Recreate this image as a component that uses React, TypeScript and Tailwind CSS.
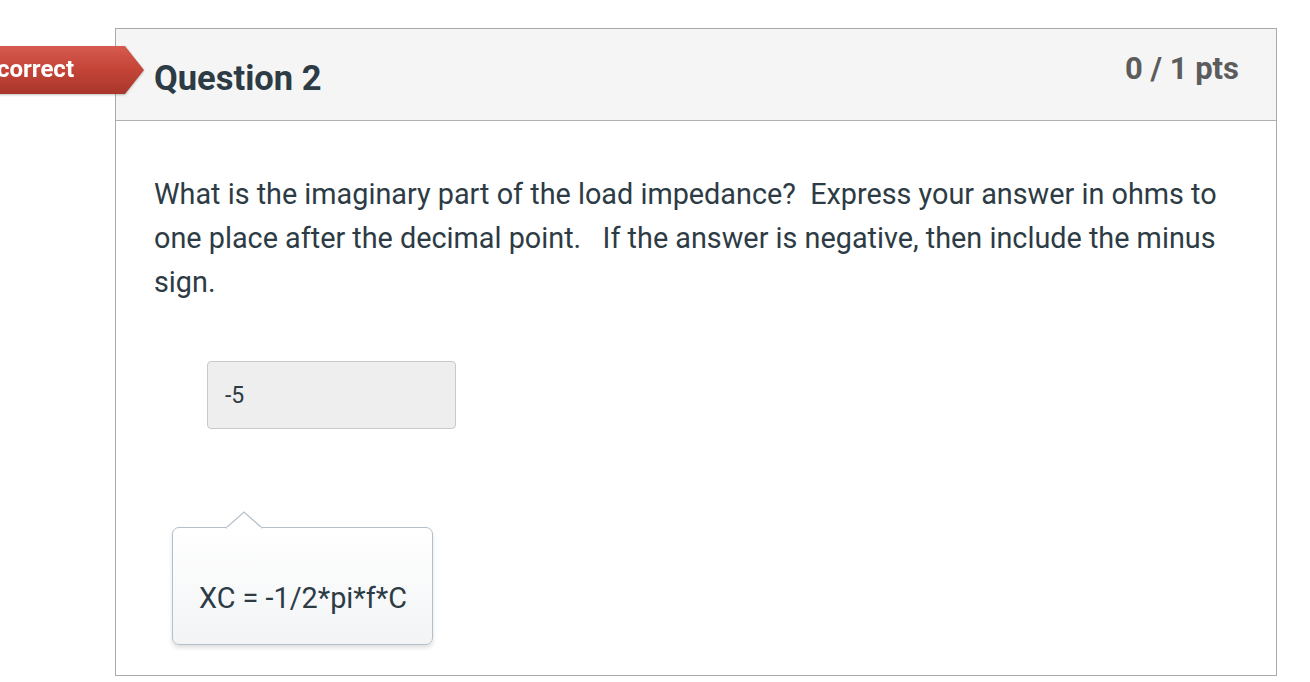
import React from 'react';

const Badge: React.FC = () => (
  <div className="absolute left-[-75px] top-[46px] flex h-[48px] items-stretch drop-shadow-[0_1px_1px_rgba(0,0,0,0.25)]">
    <div className="flex w-[200px] items-center justify-end bg-gradient-to-b from-[#d65a4f] via-[#c44437] to-[#a8362b] pb-[3px] pr-[51px] text-[24px] font-bold text-white">
      Incorrect
    </div>
    <svg width="19" height="48" viewBox="0 0 19 48" className="block">
      <defs>
        <linearGradient id="tip" x1="0" y1="0" x2="0" y2="1">
          <stop offset="0" stopColor="#d65a4f" />
          <stop offset="0.5" stopColor="#c44437" />
          <stop offset="1" stopColor="#a8362b" />
        </linearGradient>
      </defs>
      <polygon points="0,0 19,24 0,48" fill="url(#tip)" />
    </svg>
  </div>
);

const Hint: React.FC = () => (
  <div className="relative ml-[18px] mt-[98px] w-[261px]">
    <svg width="36" height="18" viewBox="0 0 36 18" className="absolute left-[54px] top-[-16px]">
      <polygon points="0,17 18,1 36,17" fill="#ffffff" stroke="#b3bfca" strokeWidth="1.2" />
      <rect x="1" y="16" width="34" height="3" fill="#ffffff" />
    </svg>
    <div className="flex h-[118px] items-center rounded-[7px] border border-[#b3bfca] bg-gradient-to-b from-white to-[#f2f4f5] pl-[26px] pt-[25px] text-[28.8px] text-[#2d3b45] shadow-[0_3px_4px_rgba(0,0,0,0.12)]">
      XC = -1/2*pi*f*C
    </div>
  </div>
);

export default function App() {
  return (
    <div className="relative h-[682px] w-[1310px] overflow-hidden bg-white pl-[115px] pt-[28px] font-['Roboto',sans-serif]">
      <div className="h-[648px] w-[1162px] border border-[#a9a9a9]">
        <div className="flex h-[92px] justify-between border-b border-[#b1b1b1] bg-[#f5f5f5] pl-[38px] pr-[37px]">
          <h2 className="pt-[29px] text-[34.5px] font-bold leading-[40px] text-[#2d3b45]">Question 2</h2>
          <div className="pt-[22px] text-[31px] font-bold leading-[36px] text-[#5c5c5c]">0 / 1 pts</div>
        </div>
        <div className="pl-[38px] pr-[50px] pt-[51px]">
          <p className="text-[28.8px] leading-[44px] text-[#2d3b45]">
            What is the imaginary part of the load impedance?&nbsp; Express your answer in ohms to one place after the decimal point.&nbsp;&nbsp; If the answer is negative, then include the minus sign.
          </p>
          <div className="ml-[53px] mt-[57px] flex h-[68px] w-[249px] items-center rounded-[4px] border border-[#c9c9c9] bg-[#eeeeee] pl-[17px] pt-[3px] text-[23px] text-[#2d3b45]">
            -5
          </div>
          <Hint />
        </div>
      </div>
      <Badge />
    </div>
  );
}
